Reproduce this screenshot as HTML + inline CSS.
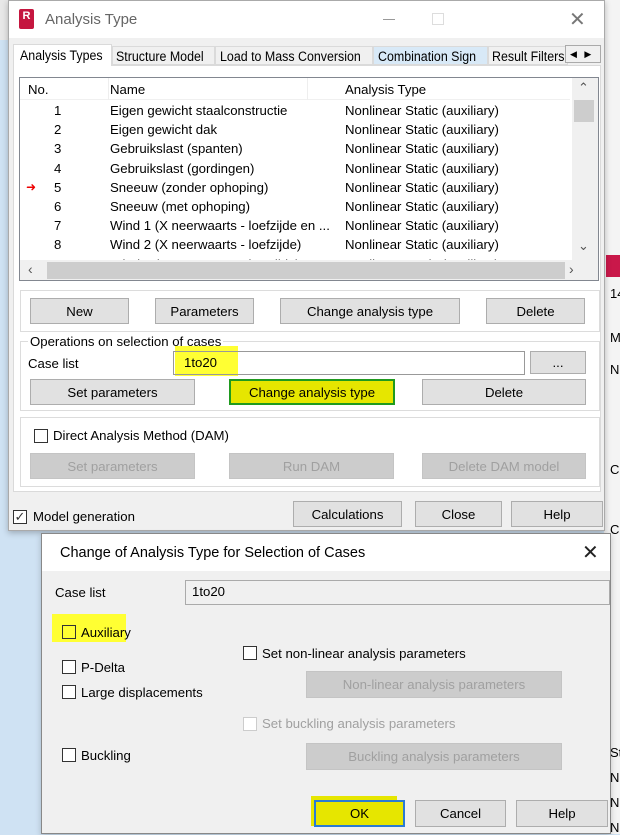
<!DOCTYPE html>
<html><head><meta charset="utf-8"><style>
*{box-sizing:border-box;margin:0;padding:0}
body{width:620px;height:834px;overflow:hidden;position:relative;background:#cfe2f3;font-family:"Liberation Sans",sans-serif;font-size:13.2px;color:#000}
.a{position:absolute;white-space:nowrap}
.btn{position:absolute;background:#e1e1e1;border:1px solid #adadad;text-align:center;font-size:13.2px;display:flex;align-items:center;justify-content:center;white-space:nowrap}
.dis{color:#a0a0a0;background:#cccccc;border-color:#c4c4c4}
.cb{position:absolute;width:14px;height:14px;border:1px solid #333;background:#fff}
.grp{position:absolute;border:1px solid #dcdcdc}
.row{position:absolute;left:0;height:19px;white-space:nowrap}
.tab{position:absolute;white-space:nowrap;overflow:hidden;font-size:13.5px}
.tab span{display:inline-block;transform:scaleX(0.92);transform-origin:left}
</style></head><body>
<div class="a" style="left:0;top:0;width:8px;height:40px;background:#e8e8e8"></div>
<div class="a" style="left:604px;top:0;width:16px;height:834px;background:#f4f4f4"></div>
<div class="a" style="left:606px;top:255px;width:14px;height:22px;background:#c9184a"></div>
<div class="a" style="left:610px;top:286px;font-size:13px">14</div>
<div class="a" style="left:610px;top:330px;font-size:13px">M</div>
<div class="a" style="left:610px;top:362px;font-size:13px">N</div>
<div class="a" style="left:610px;top:462px;font-size:13px">C</div>
<div class="a" style="left:610px;top:522px;font-size:13px">C</div>
<div class="a" style="left:610px;top:745px;font-size:13px">St</div>
<div class="a" style="left:610px;top:770px;font-size:13px">N</div>
<div class="a" style="left:610px;top:795px;font-size:13px">N</div>
<div class="a" style="left:610px;top:820px;font-size:13px">N</div>

<!-- main dialog -->
<div class="a" style="left:8px;top:0;width:597px;height:531px;background:#f0f0f0;border:1px solid #aaa;box-shadow:0 2px 6px rgba(0,0,0,.25)">
 <div class="a" style="left:0;top:0;width:595px;height:37px;background:#fff"></div>
 <div class="a" style="left:10px;top:8px;width:15px;height:20px;background:#c5163f;border-radius:2px;color:#fff;font-size:11px;font-weight:bold;text-align:center;line-height:14px">R</div>
 <div class="a" style="left:36px;top:10px;font-size:15px;color:#666">Analysis Type</div>
 <div class="a" style="left:374px;top:18px;width:12px;height:1px;background:#999"></div>
 <div class="a" style="left:423px;top:12px;width:12px;height:12px;border:1px solid #ddd"></div>
 <div class="a" style="left:560px;top:6px;font-size:20px;color:#777">✕</div>
 <!-- tabs -->
 <div class="a" style="left:4px;top:64px;width:588px;height:427px;background:#fff;border:1px solid #dadada"></div>
 <div class="tab" style="left:4px;top:43px;width:99px;height:22px;background:#fff;border:1px solid #dadada;border-bottom:none;padding:3px 0 0 6px"><span>Analysis Types</span></div>
 <div class="tab" style="left:103px;top:45px;width:103px;height:19px;background:#f0f0f0;border:1px solid #dadada;padding:2px 0 0 3px"><span>Structure Model</span></div>
 <div class="tab" style="left:206px;top:45px;width:158px;height:19px;background:#f0f0f0;border:1px solid #dadada;padding:2px 0 0 4px"><span>Load to Mass Conversion</span></div>
 <div class="tab" style="left:364px;top:45px;width:115px;height:19px;background:#d8e9f7;border:1px solid #dadada;padding:2px 0 0 4px"><span>Combination Sign</span></div>
 <div class="tab" style="left:479px;top:45px;width:80px;height:19px;background:#f0f0f0;border:1px solid #dadada;padding:2px 0 0 3px"><span>Result Filters</span></div>
 <div class="a" style="left:556px;top:44px;width:36px;height:18px;background:#f0f0f0;border:1px solid #aaa;font-size:9px;line-height:16px;padding-left:4px">◀&nbsp;&nbsp;&nbsp;▶</div>
 <!-- list -->
 <div class="a" style="left:10px;top:76px;width:580px;height:204px;border:1px solid #828790;background:#fff;overflow:hidden">
  <div class="a" style="left:0;top:0;width:550px;height:22px;border-bottom:1px solid #f0f0f0"></div>
  <div class="a" style="left:8px;top:4px">No.</div>
  <div class="a" style="left:88px;top:0;width:1px;height:22px;background:#eee"></div>
  <div class="a" style="left:90px;top:4px">Name</div>
  <div class="a" style="left:287px;top:0;width:1px;height:22px;background:#eee"></div>
  <div class="a" style="left:325px;top:4px">Analysis Type</div>
  <div class="a" style="left:0;top:23px;width:560px;line-height:19.2px">
   <div class="row" style="top:0"><span class="a" style="left:34px">1</span><span class="a" style="left:90px">Eigen gewicht staalconstructie</span><span class="a" style="left:325px">Nonlinear Static (auxiliary)</span></div>
   <div class="row" style="top:19.2px"><span class="a" style="left:34px">2</span><span class="a" style="left:90px">Eigen gewicht dak</span><span class="a" style="left:325px">Nonlinear Static (auxiliary)</span></div>
   <div class="row" style="top:38.4px"><span class="a" style="left:34px">3</span><span class="a" style="left:90px">Gebruikslast (spanten)</span><span class="a" style="left:325px">Nonlinear Static (auxiliary)</span></div>
   <div class="row" style="top:57.6px"><span class="a" style="left:34px">4</span><span class="a" style="left:90px">Gebruikslast (gordingen)</span><span class="a" style="left:325px">Nonlinear Static (auxiliary)</span></div>
   <div class="row" style="top:76.8px"><span class="a" style="left:6px;color:#e00;font-size:12px">➜</span><span class="a" style="left:34px">5</span><span class="a" style="left:90px">Sneeuw (zonder ophoping)</span><span class="a" style="left:325px">Nonlinear Static (auxiliary)</span></div>
   <div class="row" style="top:96px"><span class="a" style="left:34px">6</span><span class="a" style="left:90px">Sneeuw (met ophoping)</span><span class="a" style="left:325px">Nonlinear Static (auxiliary)</span></div>
   <div class="row" style="top:115.2px"><span class="a" style="left:34px">7</span><span class="a" style="left:90px">Wind 1 (X neerwaarts - loefzijde en ...</span><span class="a" style="left:325px">Nonlinear Static (auxiliary)</span></div>
   <div class="row" style="top:134.4px"><span class="a" style="left:34px">8</span><span class="a" style="left:90px">Wind 2 (X neerwaarts - loefzijde)</span><span class="a" style="left:325px">Nonlinear Static (auxiliary)</span></div>
   <div class="row" style="top:153.6px"><span class="a" style="left:34px">9</span><span class="a" style="left:90px">Wind 3 (X neerwaarts - luwzijde)</span><span class="a" style="left:325px">Nonlinear Static (auxiliary)</span></div>
  </div>
  <div class="a" style="left:552px;top:0;width:26px;height:182px;background:#f0f0f0"></div>
  <div class="a" style="left:558px;top:2px;font-size:13px;color:#555">&#8963;</div>
  <div class="a" style="left:554px;top:22px;width:20px;height:22px;background:#cdcdcd"></div>
  <div class="a" style="left:558px;top:160px;font-size:13px;color:#555">&#8964;</div>
  <div class="a" style="left:0;top:182px;width:578px;height:21px;background:#f0f0f0"></div>
  <div class="a" style="left:27px;top:184px;width:518px;height:17px;background:#cdcdcd"></div>
  <div class="a" style="left:8px;top:183px;font-size:14px;color:#555">&lsaquo;</div>
  <div class="a" style="left:549px;top:183px;font-size:14px;color:#555">&rsaquo;</div>
 </div>
 <!-- row1 -->
 <div class="grp" style="left:11px;top:289px;width:580px;height:42px"></div>
 <div class="btn" style="left:21px;top:297px;width:99px;height:26px">New</div>
 <div class="btn" style="left:146px;top:297px;width:99px;height:26px">Parameters</div>
 <div class="btn" style="left:271px;top:297px;width:180px;height:26px">Change analysis type</div>
 <div class="btn" style="left:477px;top:297px;width:99px;height:26px">Delete</div>
 <!-- ops group -->
 <div class="grp" style="left:11px;top:340px;width:580px;height:70px"></div>
 <div class="a" style="left:19px;top:333px;background:#fff;padding:0 2px">Operations on selection of cases</div>
 <div class="a" style="left:166px;top:345px;width:63px;height:30px;background:#ffff33"></div>
 <div class="a" style="left:19px;top:355px">Case list</div>
 <div class="a" style="left:164px;top:350px;width:352px;height:24px;border:1px solid #999;background:transparent;padding:3px 10px">1to20</div>
 <div class="btn" style="left:521px;top:350px;width:56px;height:23px">...</div>
 <div class="btn" style="left:21px;top:378px;width:165px;height:26px">Set parameters</div>
 <div class="btn" style="left:220px;top:378px;width:166px;height:26px;background:#e6e600;border:2px solid #1f9a1f">Change analysis type</div>
 <div class="btn" style="left:413px;top:378px;width:164px;height:26px">Delete</div>
 <!-- DAM -->
 <div class="grp" style="left:11px;top:416px;width:580px;height:70px"></div>
 <div class="cb" style="left:25px;top:428px"></div>
 <div class="a" style="left:44px;top:427px">Direct Analysis Method (DAM)</div>
 <div class="btn dis" style="left:21px;top:452px;width:165px;height:26px">Set parameters</div>
 <div class="btn dis" style="left:220px;top:452px;width:165px;height:26px">Run DAM</div>
 <div class="btn dis" style="left:413px;top:452px;width:164px;height:26px">Delete DAM model</div>
 <!-- bottom -->
 <div class="cb" style="left:4px;top:509px;font-size:13px;line-height:11px;text-align:center;color:#333">✓</div>
 <div class="a" style="left:24px;top:508px">Model generation</div>
 <div class="btn" style="left:284px;top:500px;width:109px;height:26px">Calculations</div>
 <div class="btn" style="left:406px;top:500px;width:87px;height:26px">Close</div>
 <div class="btn" style="left:502px;top:500px;width:92px;height:26px">Help</div>
</div>

<!-- second dialog -->
<div class="a" style="left:41px;top:533px;width:570px;height:301px;background:#f0f0f0;border:1px solid #888;box-shadow:0 2px 6px rgba(0,0,0,.2)">
 <div class="a" style="left:0;top:0;width:568px;height:37px;background:#fff"></div>
 <div class="a" style="left:18px;top:11px;font-size:14.5px">Change of Analysis Type for Selection of Cases</div>
 <div class="a" style="left:540px;top:6px;font-size:20px;color:#222">✕</div>
 <div class="a" style="left:13px;top:51px">Case list</div>
 <div class="a" style="left:143px;top:46px;width:425px;height:25px;border:1px solid #aaa;background:#f0f0f0;padding:3px 6px">1to20</div>
 <div class="a" style="left:10px;top:80px;width:74px;height:28px;background:#ffff33"></div>
 <div class="cb" style="left:20px;top:91px;background:transparent"></div>
 <div class="a" style="left:39px;top:91px">Auxiliary</div>
 <div class="cb" style="left:20px;top:126px"></div>
 <div class="a" style="left:39px;top:126px">P-Delta</div>
 <div class="cb" style="left:20px;top:151px"></div>
 <div class="a" style="left:39px;top:151px">Large displacements</div>
 <div class="cb" style="left:20px;top:214px"></div>
 <div class="a" style="left:39px;top:214px">Buckling</div>
 <div class="cb" style="left:201px;top:112px"></div>
 <div class="a" style="left:220px;top:112px">Set non-linear analysis parameters</div>
 <div class="btn dis" style="left:264px;top:137px;width:256px;height:27px">Non-linear analysis parameters</div>
 <div class="cb" style="left:201px;top:183px;border-color:#ccc"></div>
 <div class="a" style="left:220px;top:182px;color:#a0a0a0">Set buckling analysis parameters</div>
 <div class="btn dis" style="left:264px;top:209px;width:256px;height:27px">Buckling analysis parameters</div>
 <div class="a" style="left:269px;top:262px;width:86px;height:30px;background:#e6e600"></div>
 <div class="btn" style="left:272px;top:266px;width:91px;height:27px;background:#e6e600;border:2px solid #2a7bd4">OK</div>
 <div class="btn" style="left:373px;top:266px;width:91px;height:27px">Cancel</div>
 <div class="btn" style="left:474px;top:266px;width:92px;height:27px">Help</div>
</div>
</body></html>
